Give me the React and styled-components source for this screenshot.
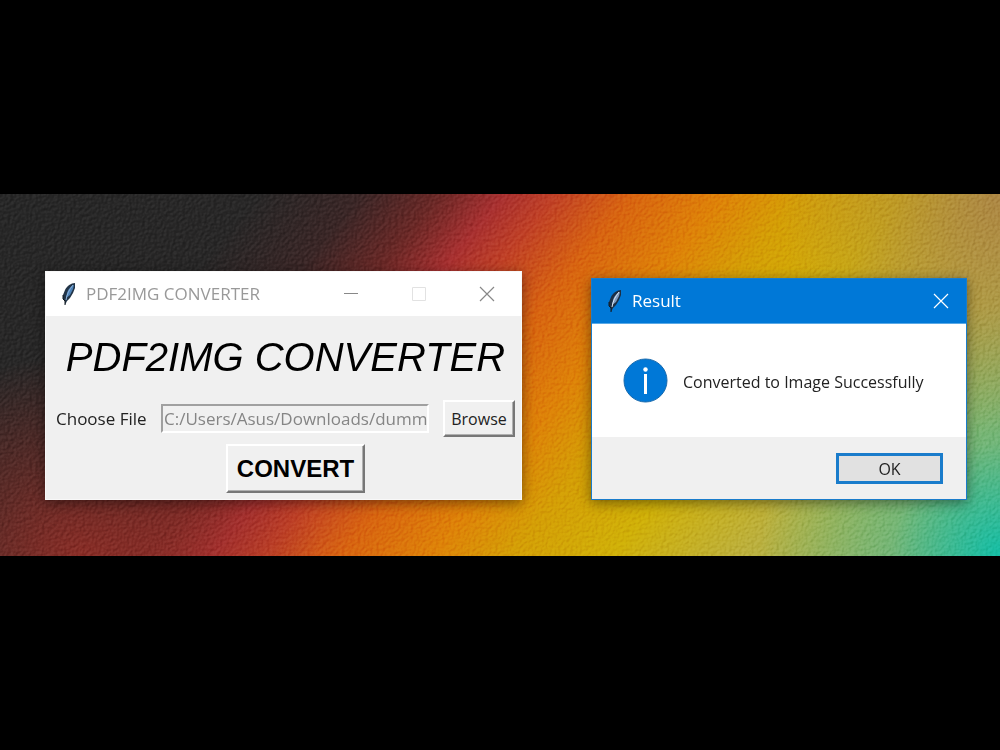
import React from 'react';
import styled, { createGlobalStyle } from 'styled-components'

const GlobalStyle = createGlobalStyle`
    * {
        box-sizing: border-box;
    }
    body {
        margin: 0;
        background: #000;
        font-family: "Open Sans", "Noto Sans", sans-serif;
    }
`
const Page = styled.main`
    min-height: 100vh;
    display: flex;
    flex-direction: column;
    justify-content: center;
    background: #000;
`
const Desktop = styled.div`
    position: relative;
    display: flex;
    justify-content: space-between;
    align-items: flex-end;
    gap: 24px;
    padding: 77px 33px 56px 45px;
    overflow: hidden;
    background:
        radial-gradient(ellipse 220px 240px at 100% 0%, rgba(170, 130, 70, 0.9), rgba(170, 135, 50, 0) 100%),
        radial-gradient(ellipse 240px 250px at 100% 100%, rgba(20, 190, 165, 1), rgba(100, 185, 130, 0.7) 45%, rgba(140, 180, 90, 0) 100%),
        radial-gradient(ellipse 240px 200px at 8% 100%, rgba(150, 46, 38, 0.85), rgba(130, 40, 36, 0) 100%),
        linear-gradient(129deg,
            #272727 0%,
            #282727 20%,
            #3a2626 28%,
            #6a2826 34%,
            #a83030 39%,
            #c04026 43%,
            #d86410 49%,
            #de8208 56%,
            #d49e06 62%,
            #d0b008 70%,
            #bcb03c 80%,
            #a0b058 90%,
            #60a880 100%);
`
const Texture = styled.svg`
    position: absolute;
    inset: 0;
    width: 100%;
    height: 100%;
    mix-blend-mode: soft-light;
    opacity: 0.3;
`
const Window = styled.section`
    position: relative;
    flex: 0 1 ${props => props.$width};
    min-width: 0;
    background: ${props => props.$active ? '#fff' : '#f0f0f0'};
    border: 1px solid ${props => props.$active ? '#1a7ccb' : '#f8f8f8'};
    box-shadow: 0 3px 12px rgba(0, 0, 0, 0.45);
`
const TitleBar = styled.header`
    display: flex;
    align-items: center;
    height: 44px;
    padding-left: 14px;
    background: ${props => props.$active ? '#0078d7' : '#fff'};
    color: ${props => props.$active ? '#fff' : '#999'};
`
const Title = styled.h2`
    flex: 1;
    margin: 0 0 0 8px;
    font-size: 17px;
    line-height: 24px;
    font-weight: 400;
    white-space: nowrap;
`
const TitleButton = styled.button`
    display: flex;
    align-items: center;
    justify-content: center;
    width: ${props => props.$width || '68px'};
    height: 44px;
    padding: 0;
    border: 0;
    background: none;
    color: ${props => props.$color};
`
const ConverterBody = styled.form`
    display: flex;
    flex-direction: column;
    padding: 17px 6px 6px 10px;
`
const Heading = styled.h1`
    margin: 0 0 19px;
    font-family: "Liberation Sans", Arial, sans-serif;
    font-size: 40px;
    line-height: 48px;
    font-weight: 400;
    font-style: italic;
    text-align: center;
    white-space: nowrap;
    color: #000;
`
const FileRow = styled.div`
    display: flex;
    align-items: center;
    margin-bottom: 7px;
`
const Label = styled.label`
    width: 105px;
    font-size: 17px;
    line-height: 24px;
    color: #222;
    white-space: nowrap;
`
const FileInput = styled.input`
    flex: 1;
    min-width: 0;
    height: 29px;
    margin-right: 14px;
    padding: 0 0 0 1px;
    border: 2px solid;
    border-color: #a0a0a0 #fff #fff #a0a0a0;
    border-radius: 0;
    background: #f0f0f0;
    color: #858585;
    font-family: inherit;
    font-size: 17px;
    outline: 0;
`
const RaisedButton = styled.button`
    padding: 0;
    border: 2px solid;
    border-color: #fff #777 #777 #fff;
    box-shadow: inset -1px -1px 0 #b0b0b0;
    background: #f0f0f0;
    color: #222;
    font-family: inherit;
    font-size: 16px;
`
const BrowseButton = styled(RaisedButton)`
    width: 72px;
    height: 37px;
`
const ConvertButton = styled(RaisedButton)`
    align-self: center;
    width: 139px;
    height: 49px;
    margin-left: 20px;
    color: #000;
    font-family: "Liberation Sans", Arial, sans-serif;
    font-size: 24px;
    font-weight: 700;
`
const Message = styled.div`
    display: flex;
    align-items: center;
    gap: 15px;
    height: 114px;
    padding-left: 31px;
    border-top: 1px solid #5aa9e6;
`
const MessageText = styled.p`
    margin: 0;
    padding-top: 3px;
    font-size: 16px;
    line-height: 24px;
    color: #222;
    white-space: nowrap;
`
const Footer = styled.footer`
    display: flex;
    justify-content: flex-end;
    padding: 16px 23px 15px;
    background: #f0f0f0;
`
const OkButton = styled.button`
    width: 107px;
    height: 31px;
    padding: 0;
    border: 3px solid #1a7ccb;
    background: #e1e1e1;
    color: #222;
    font-family: inherit;
    font-size: 16px;
    line-height: 24px;
`

const Feather = ({ active }) => (
    <svg width="18" height="26" viewBox="0 0 18 26" aria-hidden="true">
        <path d="M15 2C11 2 7 5 5 9L3 14L3 18L5 20L5 24L7 20L10 17L13 12L15 7Z" fill={active ? '#1c2f45' : '#223447'} />
        <path d="M14 4C11 5 8 8 7 12L6 17L10 14L13 8Z" fill={active ? '#7d9bc0' : '#4d82b8'} />
        <path d="M13 4C9 9 7 13 6 19" fill="none" stroke={active ? '#dce8f5' : '#8fb4dc'} />
        <path d="M3 14V18L5 20V24" fill="none" stroke="#101820" />
    </svg>
)

const CloseIcon = () => (
    <svg width="16" height="16" viewBox="0 0 16 16" aria-hidden="true">
        <path d="M1 1L15 15M15 1L1 15" stroke="currentColor" strokeWidth="1.2" />
    </svg>
)

const InfoIcon = () => (
    <svg width="45" height="45" viewBox="0 0 45 45" aria-hidden="true">
        <circle cx="22.5" cy="22.5" r="21.5" fill="#0078d7" stroke="#1769ad" />
        <circle cx="22.5" cy="11.5" r="2.2" fill="#fff" />
        <path d="M22.5 16V36" stroke="#fff" strokeWidth="3" />
    </svg>
)

const Wallpaper = () => (
    <Texture aria-hidden="true">
        <filter id="paper" x="0" y="0" width="100%" height="100%" colorInterpolationFilters="sRGB">
            <feTurbulence type="fractalNoise" baseFrequency="0.32" numOctaves="3" seed="4" />
            <feColorMatrix values="0 0 0 0 0  0 0 0 0 0  0 0 0 0 0  1 0 0 0 0" />
            <feDiffuseLighting surfaceScale="2" diffuseConstant="0.78" lightingColor="#fff">
                <feDistantLight azimuth="225" elevation="42" />
            </feDiffuseLighting>
        </filter>
        <rect width="100%" height="100%" filter="url(#paper)" />
    </Texture>
)

const Converter = () => {
    return (
        <Window $width="477px">
            <TitleBar>
                <Feather />
                <Title>PDF2IMG CONVERTER</Title>
                <TitleButton type="button" aria-label="Minimize" $color="#888">
                    <svg width="14" height="14" viewBox="0 0 14 14">
                        <path d="M0 6.5H14" stroke="currentColor" />
                    </svg>
                </TitleButton>
                <TitleButton type="button" aria-label="Maximize" $color="#e2e2e2">
                    <svg width="14" height="14" viewBox="0 0 14 14">
                        <path d="M.5.5H13.5V13.5H.5Z" fill="none" stroke="currentColor" />
                    </svg>
                </TitleButton>
                <TitleButton type="button" aria-label="Close" $color="#888">
                    <CloseIcon />
                </TitleButton>
            </TitleBar>
            <ConverterBody onSubmit={e => e.preventDefault()}>
                <Heading>PDF2IMG CONVERTER</Heading>
                <FileRow>
                    <Label htmlFor="file">Choose File</Label>
                    <FileInput id="file" type="text" readOnly value="C:/Users/Asus/Downloads/dummy" />
                    <BrowseButton type="button">Browse</BrowseButton>
                </FileRow>
                <ConvertButton type="submit">CONVERT</ConvertButton>
            </ConverterBody>
        </Window>
    );
};

const Result = () => {
    return (
        <Window $width="376px" $active>
            <TitleBar $active>
                <Feather active />
                <Title>Result</Title>
                <TitleButton type="button" aria-label="Close" $color="#fff" $width="50px">
                    <CloseIcon />
                </TitleButton>
            </TitleBar>
            <Message>
                <InfoIcon />
                <MessageText>Converted to Image Successfully</MessageText>
            </Message>
            <Footer>
                <OkButton type="button">OK</OkButton>
            </Footer>
        </Window>
    );
};

const App = () => {
    return (
        <Page>
            <GlobalStyle />
            <Desktop>
                <Wallpaper />
                <Converter />
                <Result />
            </Desktop>
        </Page>
    );
};

export default App;
